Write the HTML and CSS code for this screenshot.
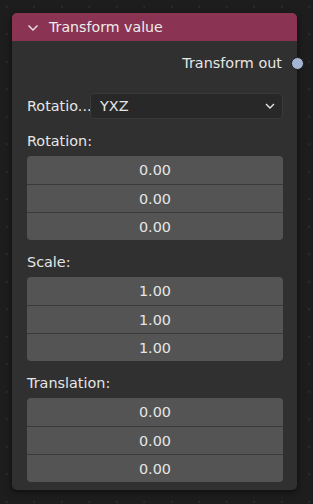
FILE: index.html
```html
<!DOCTYPE html>
<html>

<head>
  <title>Transform value</title>
  <link rel="stylesheet" href="styles.css">
</head>

<body>
  <div class="node">
    <div class="node-header">
      <svg class="chevron" width="12" height="8" viewBox="0 0 12 8">
        <path d="M1.5 1.5 L6 6 L10.5 1.5" fill="none" stroke="#e6e6e6" stroke-width="1.4" />
      </svg>
      <span>Transform value</span>
    </div>

    <div class="node-body">
      <div class="output-row">
        <span>Transform out</span>
        <span class="socket"></span>
      </div>

      <div class="prop-row">
        <span class="prop-label">Rotatio...</span>
        <div class="dropdown">
          <span>YXZ</span>
          <svg width="12" height="8" viewBox="0 0 12 8">
            <path d="M2 2 L6 6 L10 2" fill="none" stroke="#e6e6e6" stroke-width="1.4" />
          </svg>
        </div>
      </div>

      <div class="group">
        <div class="group-label">Rotation:</div>
        <div class="fields">
          <div class="field">0.00</div>
          <div class="field">0.00</div>
          <div class="field">0.00</div>
        </div>
      </div>

      <div class="group">
        <div class="group-label">Scale:</div>
        <div class="fields">
          <div class="field">1.00</div>
          <div class="field">1.00</div>
          <div class="field">1.00</div>
        </div>
      </div>

      <div class="group">
        <div class="group-label">Translation:</div>
        <div class="fields">
          <div class="field">0.00</div>
          <div class="field">0.00</div>
          <div class="field">0.00</div>
        </div>
      </div>
    </div>
  </div>
</body>

</html>
```

FILE: styles.css
```css
body {
  margin: 0;
  height: 504px;
  overflow: hidden;
  font-family: "DejaVu Sans", sans-serif;
  font-size: 14.4px;
  color: #e6e6e6;
  background-color: #1d1d1d;
  background-image: radial-gradient(circle, #2c2c2c 1px, transparent 1.5px);
  background-size: 27.5px 27.5px;
  background-position: -7px -7px;
}

.node {
  margin: 13px 0 0 12px;
  width: 285px;
  height: 477px;
  background: #303030;
  border-radius: 5px;
  box-shadow: 0 2px 6px rgba(0, 0, 0, 0.55);
  display: flex;
  flex-direction: column;
}

.node-header {
  height: 28px;
  background: #8b3352;
  border-radius: 5px 5px 0 0;
  display: flex;
  align-items: center;
  gap: 10px;
  padding-left: 15px;
  font-size: 14.2px;
  color: #ececec;
}

.chevron {
  margin-top: 1px;
}

.node-body {
  padding: 11px 14px 7px 15px;
  display: flex;
  flex-direction: column;
}

.output-row {
  position: relative;
  height: 22px;
  display: flex;
  align-items: center;
  justify-content: flex-end;
  padding-right: 1px;
}

.socket {
  position: absolute;
  right: -21px;
  top: 5px;
  width: 11px;
  height: 11px;
  border-radius: 50%;
  background: #a3b5d2;
  border: 1px solid #1a1a1a;
}

.prop-row {
  margin-top: 19px;
  display: flex;
  align-items: center;
  gap: 2px;
}

.prop-label {
  width: 61px;
  white-space: nowrap;
}

.dropdown {
  flex: 1;
  height: 24px;
  background: #282828;
  border: 1px solid #3a3a3a;
  border-radius: 4px;
  display: flex;
  align-items: center;
  justify-content: space-between;
  padding: 0 6px 0 9px;
}

.group {
  margin-top: 12px;
}

.group:first-of-type {
  margin-top: 13px;
}

.group-label {
  height: 20px;
  line-height: 20px;
  margin-bottom: 5px;
}

.fields {
  border-radius: 4px;
  overflow: hidden;
  background: #545454;
}

.field {
  height: 28px;
  line-height: 28px;
  text-align: center;
  border-top: 1px solid #3a3a3a;
  box-sizing: border-box;
}

.field:first-child {
  border-top: none;
}
```
